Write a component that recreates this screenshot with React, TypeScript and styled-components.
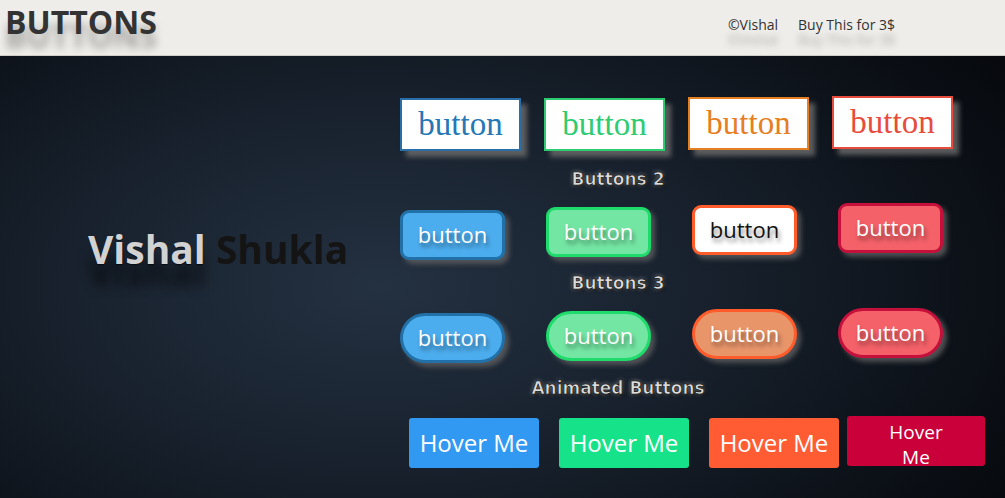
import React from 'react';
import styled, { createGlobalStyle } from 'styled-components';

const GlobalStyle = createGlobalStyle`
  html, body {
    margin: 0;
    padding: 0;
    height: 100%;
  }
  body {
    font-family: 'Open Sans', 'Liberation Sans', sans-serif;
    overflow: hidden;
  }
  #root {
    height: 100%;
  }
`;

const Page = styled.div`
  display: flex;
  flex-direction: column;
  height: 100vh;
`;

const Header = styled.header`
  display: flex;
  justify-content: space-between;
  align-items: flex-start;
  height: 56px;
  box-sizing: border-box;
  padding: 3px 0 0 5px;
  background: #eeede9;
  border-bottom: 1px solid #cfcdc6;
`;

const Logo = styled.h1`
  margin: 0;
  font-size: 32px;
  line-height: 38px;
  font-weight: 700;
  color: #333333;
  text-shadow: 0 14px 8px rgba(0, 0, 0, 0.32);
`;

const Nav = styled.nav`
  display: flex;
  gap: 20px;
  padding: 12px 110px 0 0;
`;

const NavLink = styled.a`
  font-size: 14px;
  line-height: 20px;
  color: #333333;
  text-decoration: none;
  text-shadow: 0 15px 7px rgba(0, 0, 0, 0.28);
`;

const Main = styled.main`
  flex: 1;
  display: flex;
  background: radial-gradient(
    ellipse 75% 95% at 38% 52%,
    #243141 0%,
    #1a2431 35%,
    #0f151d 70%,
    #06080c 100%
  );
`;

const Intro = styled.div`
  width: 400px;
  box-sizing: border-box;
  padding: 169px 0 0 88px;
`;

const Name = styled.h2`
  margin: 0;
  font-size: 39px;
  line-height: 47px;
  font-weight: 700;
  white-space: nowrap;
`;

const First = styled.span`
  color: #d2d2d2;
  text-shadow: 0 1px 1px rgba(0, 0, 0, 0.6), 0 22px 12px rgba(0, 0, 0, 0.6);
`;

const Last = styled.span`
  color: #141414;
`;

const Showcase = styled.section`
  display: flex;
  flex-direction: column;
  padding-top: 40px;
`;

const Row = styled.div<{ $gap: number; $top?: number; $indent?: number }>`
  display: flex;
  align-items: flex-start;
  gap: ${p => p.$gap}px;
  margin-top: ${p => p.$top ?? 0}px;
  margin-left: ${p => p.$indent ?? 0}px;
`;

const Heading = styled.h3<{ $top: number }>`
  width: 436px;
  margin: ${p => p.$top}px 0 0;
  text-align: center;
  font-family: 'DejaVu Sans', sans-serif;
  font-size: 17px;
  line-height: 20px;
  font-weight: 700;
  color: #dcdcdc;
  -webkit-text-stroke: 0.7px #151515;
  text-shadow:
    0 0 1px #111,
    0 0 4px rgba(190, 190, 190, 0.7),
    2px 2px 3px rgba(0, 0, 0, 0.8);
`;

type Tone = { text: string; bg: string; border: string };

const OutlineButton = styled.button<{ $tone: Tone; $drop: number }>`
  width: 121px;
  height: 53px;
  margin-top: ${p => p.$drop}px;
  padding: 0;
  background: #ffffff;
  border: 2px solid ${p => p.$tone.border};
  color: ${p => p.$tone.text};
  font-family: 'Liberation Serif', serif;
  font-size: 33px;
  line-height: 1;
  box-shadow: 6px 6px 5px rgba(105, 105, 105, 0.85);
  cursor: pointer;
`;

const SoftButton = styled.button<{ $tone: Tone; $drop: number; $pill?: boolean }>`
  width: 105px;
  height: 50px;
  margin-top: ${p => p.$drop}px;
  padding: 0 0 2px;
  background: ${p => p.$tone.bg};
  border: 3px solid ${p => p.$tone.border};
  border-radius: ${p => (p.$pill ? '25px' : '9px')};
  color: ${p => p.$tone.text};
  font-family: 'Open Sans', sans-serif;
  font-size: 22px;
  font-weight: 500;
  text-shadow: 2px 4px 4px rgba(0, 0, 0, 0.45);
  box-shadow: 4px 4px 5px rgba(100, 100, 100, 0.75);
  cursor: pointer;
`;

const FlatButton = styled.button<{ $bg: string; $drop: number; $wide?: boolean }>`
  width: ${p => (p.$wide ? 138 : 130)}px;
  height: 50px;
  margin-top: ${p => p.$drop}px;
  margin-left: ${p => (p.$wide ? -12 : 0)}px;
  padding: ${p => (p.$wide ? '4px 34px 0' : '0')};
  background: ${p => p.$bg};
  border: none;
  border-radius: 3px;
  color: #ffffff;
  font-family: 'Open Sans', sans-serif;
  font-size: ${p => (p.$wide ? 19 : 24)}px;
  line-height: ${p => (p.$wide ? '25px' : '1')};
  cursor: pointer;
`;

const outline: Tone[] = [
  { text: '#2577b5', bg: '#fff', border: '#2a6ea8' },
  { text: '#2ecc71', bg: '#fff', border: '#2ecc71' },
  { text: '#e67e22', bg: '#fff', border: '#e67e22' },
  { text: '#e74c3c', bg: '#fff', border: '#e74c3c' },
];

const soft: Tone[] = [
  { text: '#ffffff', bg: '#4cadee', border: '#2170a7' },
  { text: '#ffffff', bg: '#74e6a4', border: '#1edb6b' },
  { text: '#111111', bg: '#ffffff', border: '#ff5b2b' },
  { text: '#ffffff', bg: '#f46168', border: '#c5103c' },
];

const pillTones: Tone[] = [soft[0], soft[1], { text: '#ffffff', bg: '#e8956a', border: '#ff5b2b' }, soft[3]];

const flatColors = ['#3199f2', '#16e389', '#ff5c33', '#c9003a'];

const App: React.FC = () => {
  return (
    <Page>
      <GlobalStyle />
      <Header>
        <Logo>BUTTONS</Logo>
        <Nav>
          <NavLink href="#">©Vishal</NavLink>
          <NavLink href="#">Buy This for 3$</NavLink>
        </Nav>
      </Header>

      <Main>
        <Intro>
          <Name>
            <First>Vishal</First> <Last>Shukla</Last>
          </Name>
        </Intro>

        <Showcase>
          <Row $gap={23}>
            {outline.map((tone, i) => (
              <OutlineButton key={i} $tone={tone} $drop={[2, 2, 1, 0][i]}>
                button
              </OutlineButton>
            ))}
          </Row>

          <Heading $top={18}>Buttons 2</Heading>
          <Row $gap={41} $top={14}>
            {soft.map((tone, i) => (
              <SoftButton key={i} $tone={tone} $drop={[7, 4, 2, 0][i]}>
                button
              </SoftButton>
            ))}
          </Row>

          <Heading $top={13}>Buttons 3</Heading>
          <Row $gap={41} $top={15}>
            {pillTones.map((tone, i) => (
              <SoftButton key={i} $tone={tone} $drop={[5, 3, 1, 0][i]} $pill>
                button
              </SoftButton>
            ))}
          </Row>

          <Heading $top={15}>Animated Buttons</Heading>
          <Row $gap={20} $top={18} $indent={9}>
            {flatColors.map((bg, i) => (
              <FlatButton key={i} $bg={bg} $drop={i === 3 ? 0 : 2} $wide={i === 3}>
                Hover Me
              </FlatButton>
            ))}
          </Row>
        </Showcase>
      </Main>
    </Page>
  );
};

export default App;
